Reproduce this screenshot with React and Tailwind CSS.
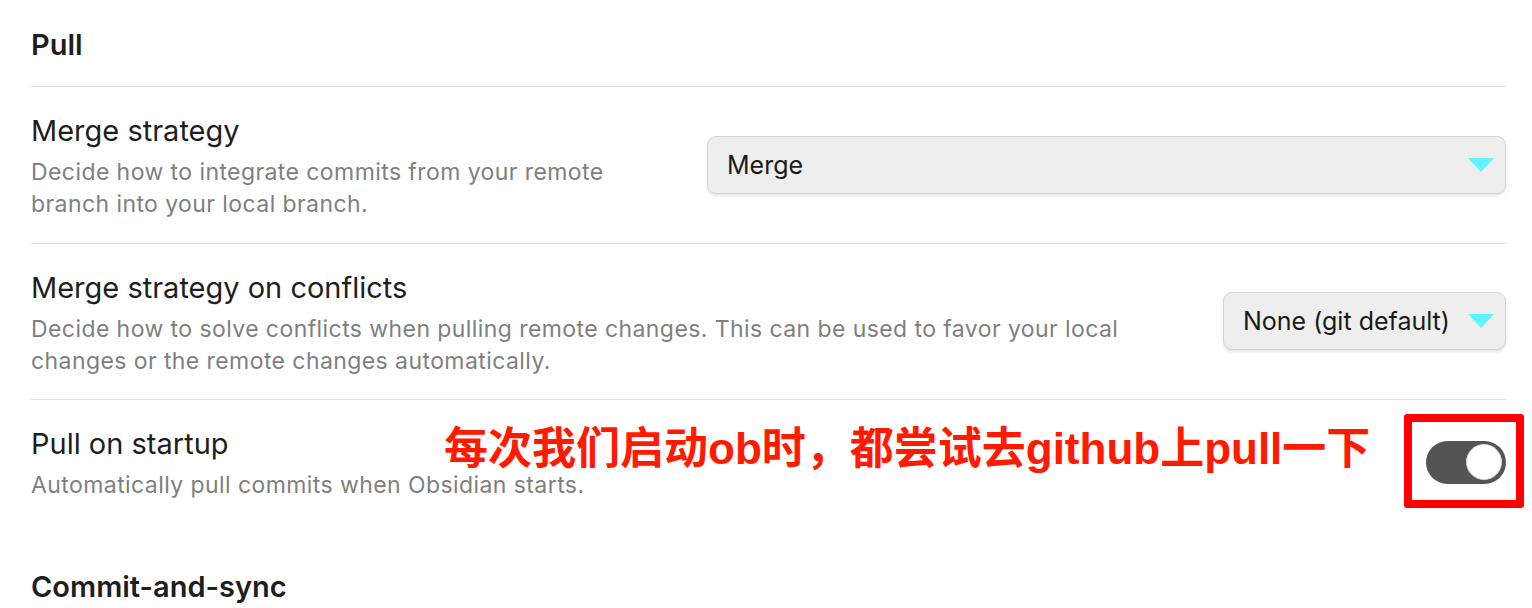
import React from "react";

const font = { fontFamily: "Inter, 'Noto Sans', 'Liberation Sans', sans-serif" };

function Dropdown({ label, className }) {
  return (
    <div
      className={
        "flex shrink-0 items-center justify-between h-[58px] rounded-[9px] bg-[#eeeeee] border border-[#d4d4d4] shadow-[0_2px_3px_rgba(0,0,0,0.10)] pl-[19px] pr-[11px] text-[25px] text-[#1a1a1a] whitespace-nowrap " +
        className
      }
    >
      <span className="leading-none">{label}</span>
      <svg width="26" height="14" viewBox="0 0 26 14" className="ml-[12px] shrink-0">
        <polygon points="0,0 26,0 13,14" fill="#5ff3ff" />
      </svg>
    </div>
  );
}

function Info({ name, desc, className = "" }) {
  return (
    <div className={"flex flex-col " + className}>
      <div className="text-[29px] leading-[36px] text-[#1e1e1e]">{name}</div>
      <div className="mt-[7px] text-[23px] leading-[32px] tracking-[0.42px] text-[#7f7f7f]">{desc}</div>
    </div>
  );
}

export default function App() {
  return (
    <div className="relative w-[1532px] h-[608px] overflow-hidden bg-white" style={font}>
      <div className="pl-[31px] pr-[26px]">
        <div className="pt-[27px] pb-[23px] text-[29px] leading-[36px] font-semibold text-[#1e1e1e]">Pull</div>

        <div className="flex items-center border-t border-[#e0e0e0] pt-[26px] pb-[23px]">
          <Info
            className="w-[640px]"
            name="Merge strategy"
            desc="Decide how to integrate commits from your remote branch into your local branch."
          />
          <Dropdown label="Merge" className="ml-auto w-[799px] mb-[3px]" />
        </div>

        <div className="flex items-center border-t border-[#e0e0e0] pt-[26px] pb-[22px]">
          <Info
            className="flex-1 mr-[40px]"
            name="Merge strategy on conflicts"
            desc="Decide how to solve conflicts when pulling remote changes. This can be used to favor your local changes or the remote changes automatically."
          />
          <Dropdown label="None (git default)" className="w-[283px] mb-[5px]" />
        </div>

        <div className="flex items-center border-t border-[#e0e0e0] pt-[26px] pb-[23px]">
          <Info className="flex-1" name="Pull on startup" desc="Automatically pull commits when Obsidian starts." />
          <div className="relative flex items-center w-[80px] h-[43px] mb-[3px] rounded-full bg-[#545454]">
            <div className="absolute right-[4px] w-[36px] h-[36px] rounded-full bg-white border border-[#d8d8d8]" />
          </div>
        </div>

        <div className="pt-[45px] text-[29px] leading-[36px] font-semibold text-[#1e1e1e]">Commit-and-sync</div>
      </div>

      <div
        className="absolute left-[444px] top-[421px] text-[44px] leading-[56px] font-bold text-[#ff1a00] whitespace-nowrap"
        style={{ fontFamily: "'Liberation Sans', 'Noto Sans CJK SC', sans-serif" }}
      >
        每次我们启动ob时，都尝试去github上pull一下
      </div>
      <div className="absolute left-[1404px] top-[414px] w-[120px] h-[94px] border-[8px] border-[#ff0000] rounded-[3px]" />
    </div>
  );
}
